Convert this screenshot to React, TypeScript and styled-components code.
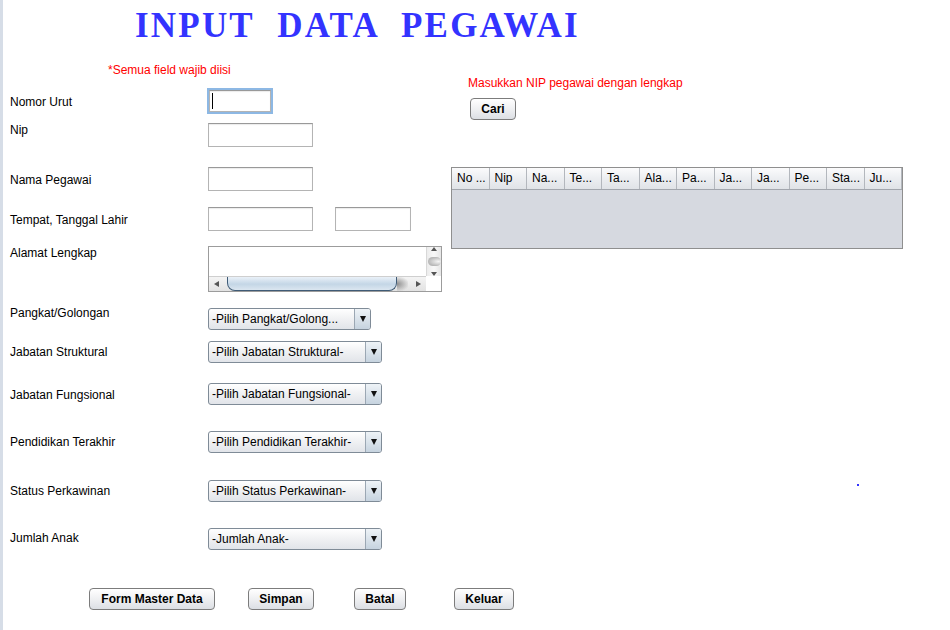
import styled, { createGlobalStyle } from 'styled-components';

const GlobalStyle = createGlobalStyle`
  * {
    box-sizing: border-box;
  }
  html,
  body {
    margin: 0;
    padding: 0;
    background: #fff;
  }
  body {
    font-family: 'Liberation Sans', Arial, sans-serif;
    font-size: 12px;
    color: #000;
  }
`;

const Page = styled.div`
  width: 950px;
  height: 630px;
  border-left: 3px solid #d6dde7;
  background: #fff;
  overflow: hidden;
`;

const Title = styled.h1`
  margin: 0;
  padding: 10px 0 0 132px;
  font-family: 'Liberation Serif', 'Times New Roman', serif;
  font-weight: bold;
  font-size: 35px;
  line-height: 32px;
  letter-spacing: 2.2px;
  word-spacing: 12px;
  color: #3333ff;
  white-space: nowrap;
`;

const Main = styled.div`
  display: flex;
`;

const LeftColumn = styled.div`
  width: 448px;
  padding-left: 7px;
`;

const RequiredNote = styled.p`
  margin: 21px 0 0 98px;
  line-height: 14px;
  color: #ff0000;
`;

const Form = styled.div`
  margin-top: 13px;
`;

const FormRow = styled.div<{ $h: number }>`
  display: grid;
  grid-template-columns: 198px auto;
  align-items: start;
  height: ${(p) => p.$h}px;
`;

const Label = styled.span<{ $shift: number }>`
  margin-top: ${(p) => p.$shift}px;
  line-height: 14px;
  white-space: nowrap;
`;

const FieldGroup = styled.div`
  display: flex;
  gap: 22px;
`;

const TextField = styled.div<{ $w: number; $focused?: boolean }>`
  width: ${(p) => p.$w}px;
  height: ${(p) => (p.$focused ? 22 : 24)}px;
  margin-left: ${(p) => (p.$focused ? 1 : 0)}px;
  padding: 2px 0 0 2px;
  border: 1px solid #b4b4b4;
  border-top-color: #999;
  background: #fff;
  box-shadow: inset 0 1px 1px rgba(0, 0, 0, 0.08)
    ${(p) => (p.$focused ? ', 0 0 0 2px #8db8e4' : '')};
`;

const Caret = styled.div`
  width: 1px;
  height: 16px;
  background: #000;
`;

const ScrollPane = styled.div`
  width: 234px;
  height: 46px;
  border: 1px solid #9c9c9c;
  background: #fff;
  display: grid;
  grid-template-columns: 1fr 15px;
  grid-template-rows: 1fr 15px;
`;

const Viewport = styled.div`
  background: #fff;
`;

const VScrollBar = styled.div`
  display: flex;
  flex-direction: column;
  align-items: center;
  justify-content: space-between;
  background: linear-gradient(90deg, #ececec, #f8f8f8 50%, #e6e6e6);
  border-left: 1px solid #d8d8d8;
`;

const VThumb = styled.div`
  width: 13px;
  height: 9px;
  border-radius: 6px;
  background: radial-gradient(ellipse at 80% 50%, #f4f4f4, #b8b8b8 70%);
`;

const HScrollBar = styled.div`
  display: flex;
  align-items: stretch;
  background: linear-gradient(#f4f4f4, #e2e2e2);
  border-top: 1px solid #cfcfcf;
`;

const ArrowBox = styled.div`
  width: 15px;
  display: flex;
  align-items: center;
  justify-content: center;
  flex: none;
`;

const SmallArrow = styled.div<{ $dir: 'up' | 'down' | 'left' | 'right' }>`
  width: 0;
  height: 0;
  border: 3px solid transparent;
  ${(p) =>
    p.$dir === 'up'
      ? 'border-bottom: 4px solid #555; border-top-width: 0;'
      : p.$dir === 'down'
        ? 'border-top: 4px solid #555; border-bottom-width: 0;'
        : p.$dir === 'left'
          ? 'border-right: 5px solid #555; border-left-width: 0;'
          : 'border-left: 5px solid #555; border-right-width: 0;'}
`;

const HTrack = styled.div`
  flex: 1;
  display: flex;
  align-items: stretch;
  padding-left: 3px;
`;

const HThumb = styled.div`
  width: 170px;
  border: 1px solid #3f5b76;
  border-top: none;
  border-radius: 0 0 8px 8px;
  background: linear-gradient(#eaf1f8, #c4d6e6 55%, #dbe6f0);
`;

const ThumbShade = styled.div`
  width: 11px;
  background: radial-gradient(ellipse at 0% 50%, #8e8e8e, rgba(230, 230, 230, 0) 80%);
`;

const Corner = styled.div`
  background: #fff;
`;

const Combo = styled.div<{ $w: number }>`
  width: ${(p) => p.$w}px;
  height: 22px;
  display: flex;
  align-items: stretch;
  border: 1px solid #7f8b97;
  border-radius: 3px;
  background: linear-gradient(#ffffff, #f1f2f4 45%, #e1e4e9);
  overflow: hidden;
`;

const ComboText = styled.span`
  flex: 1;
  padding-left: 3px;
  line-height: 20px;
  white-space: nowrap;
  overflow: hidden;
`;

const ComboButton = styled.div`
  width: 16px;
  flex: none;
  display: flex;
  align-items: center;
  justify-content: center;
  border-left: 1px solid #9ba7b3;
  background: linear-gradient(#eef3f7, #c6d3df);
`;

const ComboArrow = styled.div`
  width: 0;
  height: 0;
  border-left: 3.5px solid transparent;
  border-right: 3.5px solid transparent;
  border-top: 6px solid #111;
`;

const RightColumn = styled.div`
  display: flex;
  flex-direction: column;
  align-items: flex-start;
`;

const SearchNote = styled.p`
  margin: 34px 0 0 17px;
  line-height: 14px;
  color: #ff0000;
  white-space: nowrap;
`;

const Button = styled.button<{ $w: number; $ml?: number; $mt?: number }>`
  width: ${(p) => p.$w}px;
  height: 22px;
  margin: ${(p) => p.$mt ?? 0}px 0 0 ${(p) => p.$ml ?? 0}px;
  padding: 0;
  border: 1px solid #7c7c7c;
  border-radius: 4px;
  background: linear-gradient(#ffffff, #eff0f2 50%, #dcdfe4);
  box-shadow: inset 0 1px 0 #fff;
  font-family: 'Liberation Sans', Arial, sans-serif;
  font-weight: bold;
  font-size: 12px;
  color: #000;
`;

const Table = styled.div`
  width: 452px;
  height: 82px;
  margin-top: 47px;
  border: 1px solid #8f8f8f;
  background: #d6d9e0;
`;

const HeaderRow = styled.div`
  display: grid;
  grid-template-columns: repeat(12, 1fr);
  height: 22px;
  border-bottom: 1px solid #a2a6ad;
  background: linear-gradient(#fbfbfc, #eceef1 50%, #e0e3e7);
`;

const HeaderCell = styled.div`
  padding-left: 5px;
  line-height: 21px;
  border-right: 1px solid #b3b7bd;
  white-space: nowrap;
  overflow: hidden;
`;

const Dot = styled.div`
  width: 2px;
  height: 2px;
  margin: 235px 0 0 406px;
  background: #3333ff;
`;

const Footer = styled.div`
  display: flex;
  margin-top: 38px;
  padding-left: 86px;
`;

const columns = ['No ...', 'Nip', 'Na...', 'Te...', 'Ta...', 'Ala...', 'Pa...', 'Ja...', 'Ja...', 'Pe...', 'Sta...', 'Ju...'];

const combos = [
  { label: 'Pangkat/Golongan', text: '-Pilih Pangkat/Golong...', w: 163, h: 33, shift: -2 },
  { label: 'Jabatan Struktural', text: '-Pilih Jabatan Struktural-', w: 174, h: 42, shift: 4 },
  { label: 'Jabatan Fungsional', text: '-Pilih Jabatan Fungsional-', w: 174, h: 48, shift: 5 },
  { label: 'Pendidikan Terakhir', text: '-Pilih Pendidikan Terakhir-', w: 174, h: 49, shift: 4 },
  { label: 'Status Perkawinan', text: '-Pilih Status Perkawinan-', w: 174, h: 48, shift: 4 },
  { label: 'Jumlah Anak', text: '-Jumlah Anak-', w: 174, h: 22, shift: 3 },
];

export default function App() {
  return (
    <Page>
      <GlobalStyle />
      <Title>INPUT DATA PEGAWAI</Title>
      <Main>
        <LeftColumn>
          <RequiredNote>*Semua field wajib diisi</RequiredNote>
          <Form>
            <FormRow $h={33}>
              <Label $shift={5}>Nomor Urut</Label>
              <TextField $w={62} $focused>
                <Caret />
              </TextField>
            </FormRow>
            <FormRow $h={44}>
              <Label $shift={0}>Nip</Label>
              <TextField $w={105} />
            </FormRow>
            <FormRow $h={40}>
              <Label $shift={6}>Nama Pegawai</Label>
              <TextField $w={105} />
            </FormRow>
            <FormRow $h={39}>
              <Label $shift={6}>Tempat, Tanggal Lahir</Label>
              <FieldGroup>
                <TextField $w={105} />
                <TextField $w={76} />
              </FieldGroup>
            </FormRow>
            <FormRow $h={62}>
              <Label $shift={0}>Alamat Lengkap</Label>
              <ScrollPane>
                <Viewport />
                <VScrollBar>
                  <ArrowBox>
                    <SmallArrow $dir="up" />
                  </ArrowBox>
                  <VThumb />
                  <ArrowBox>
                    <SmallArrow $dir="down" />
                  </ArrowBox>
                </VScrollBar>
                <HScrollBar>
                  <ArrowBox>
                    <SmallArrow $dir="left" />
                  </ArrowBox>
                  <HTrack>
                    <HThumb />
                    <ThumbShade />
                  </HTrack>
                  <ArrowBox>
                    <SmallArrow $dir="right" />
                  </ArrowBox>
                </HScrollBar>
                <Corner />
              </ScrollPane>
            </FormRow>
            {combos.map((c) => (
              <FormRow key={c.label} $h={c.h}>
                <Label $shift={c.shift}>{c.label}</Label>
                <Combo $w={c.w}>
                  <ComboText>{c.text}</ComboText>
                  <ComboButton>
                    <ComboArrow />
                  </ComboButton>
                </Combo>
              </FormRow>
            ))}
          </Form>
        </LeftColumn>
        <RightColumn>
          <SearchNote>Masukkan NIP pegawai dengan lengkap</SearchNote>
          <Button $w={46} $ml={19} $mt={8}>
            Cari
          </Button>
          <Table>
            <HeaderRow>
              {columns.map((col, i) => (
                <HeaderCell key={i}>{col}</HeaderCell>
              ))}
            </HeaderRow>
          </Table>
          <Dot />
        </RightColumn>
      </Main>
      <Footer>
        <Button $w={126}>Form Master Data</Button>
        <Button $w={66} $ml={33}>
          Simpan
        </Button>
        <Button $w={52} $ml={40}>
          Batal
        </Button>
        <Button $w={60} $ml={48}>
          Keluar
        </Button>
      </Footer>
    </Page>
  );
}
